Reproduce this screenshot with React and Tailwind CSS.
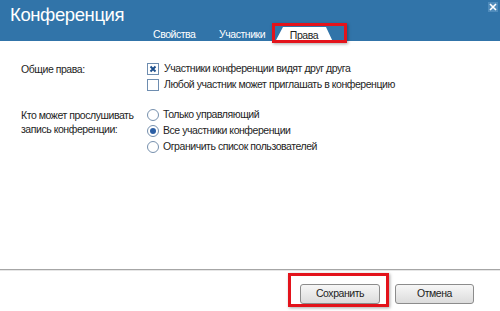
import React from 'react';

function CheckBox({ checked }) {
  return (
    <span className="w-[12px] h-[12px] border border-[#6e8db0] bg-white flex items-center justify-center shrink-0">
      {checked && (
        <svg width="8" height="8" viewBox="0 0 8 8">
          <path d="M1.5 1.5 L6.5 6.5 M6.5 1.5 L1.5 6.5" stroke="#1d4f8c" strokeWidth="1.9" />
        </svg>
      )}
    </span>
  );
}

function Radio({ checked }) {
  return (
    <span className="w-[12px] h-[12px] rounded-full border border-[#7690ad] bg-white flex items-center justify-center shrink-0">
      {checked && <span className="w-[6px] h-[6px] rounded-full bg-[#2c5fa5]" />}
    </span>
  );
}

export default function App() {
  return (
    <div className="w-[500px] h-[311px] bg-white flex flex-col relative overflow-hidden font-['Liberation_Sans',Arial,sans-serif] text-[10.5px] tracking-[-0.45px] text-[#1e1e1e]">
      {/* Header */}
      <div className="h-[41px] bg-[#3174a9] flex flex-col shrink-0">
        <div className="flex justify-between">
          <div className="pl-[10px] pt-[3px] text-[18.5px] tracking-[-0.4px] leading-[24px] text-white">Конференция</div>
          <div className="mt-[2px] mr-[2px] w-[10px] h-[10px] bg-[#4f8bbb] flex items-center justify-center">
            <svg width="8" height="8" viewBox="0 0 8 8">
              <path d="M1 1 L7 7 M7 1 L1 7" stroke="#ffffff" strokeWidth="1.6" />
            </svg>
          </div>
        </div>
        <div className="mt-auto flex items-end h-[15px] pl-[153px]">
          <span className="w-[66px] text-white leading-[15px] whitespace-nowrap">Свойства</span>
          <span className="w-[56px] text-white leading-[15px] whitespace-nowrap">Участники</span>
          <span className="w-[58px] h-[15px] bg-white text-center leading-[16px] text-[#1e1e1e] [clip-path:polygon(8px_0,51px_0,58px_100%,0_100%)]">
            Права
          </span>
        </div>
      </div>

      {/* Content */}
      <div className="flex-1 pt-[20px] pl-[21px] whitespace-nowrap">
        <div className="flex">
          <div className="w-[126px] leading-[16px]">Общие права:</div>
          <div className="flex flex-col">
            <div className="h-[16px] flex items-center gap-[5px]">
              <CheckBox checked />
              <span>Участники конференции видят друг друга</span>
            </div>
            <div className="h-[16px] flex items-center gap-[5px]">
              <CheckBox />
              <span>Любой участник может приглашать в конференцию</span>
            </div>
          </div>
        </div>

        <div className="flex mt-[14px]">
          <div className="w-[126px] leading-[14px] pt-[1px]">
            Кто может прослушивать
            <br />
            запись конференции:
          </div>
          <div className="flex flex-col">
            <div className="h-[16px] flex items-center gap-[4px]">
              <Radio />
              <span>Только управляющий</span>
            </div>
            <div className="h-[16px] flex items-center gap-[4px]">
              <Radio checked />
              <span>Все участники конференции</span>
            </div>
            <div className="h-[16px] flex items-center gap-[4px]">
              <Radio />
              <span>Ограничить список пользователей</span>
            </div>
          </div>
        </div>
      </div>

      {/* Divider */}
      <div className="h-[1px] bg-[#a6a6a6] shrink-0" />
      <div className="h-[1px] bg-[#e6e6e6] shrink-0" />

      {/* Footer */}
      <div className="h-[40px] shrink-0 flex justify-end items-start pt-[13px] pr-[26px] gap-[15px]">
        <button className="w-[80px] h-[20px] rounded-[3px] border border-[#8c8c8c] bg-gradient-to-b from-[#f7f7f7] to-[#dcdcdc] text-[10.5px] tracking-[-0.45px] text-[#1e1e1e]">
          Сохранить
        </button>
        <button className="w-[79px] h-[20px] rounded-[3px] border border-[#8c8c8c] bg-gradient-to-b from-[#f7f7f7] to-[#dcdcdc] text-[10.5px] tracking-[-0.45px] text-[#1e1e1e]">
          Отмена
        </button>
      </div>

      {/* Annotation boxes */}
      <div className="absolute left-[272px] top-[23px] w-[75px] h-[20px] border-[3px] border-[#e3131b] shadow-[1px_1px_3px_rgba(0,0,0,0.35)]" />
      <div className="absolute left-[288px] top-[273px] w-[101px] h-[34px] border-[3px] border-[#e3131b] shadow-[1px_1px_3px_rgba(0,0,0,0.35)]" />
    </div>
  );
}
